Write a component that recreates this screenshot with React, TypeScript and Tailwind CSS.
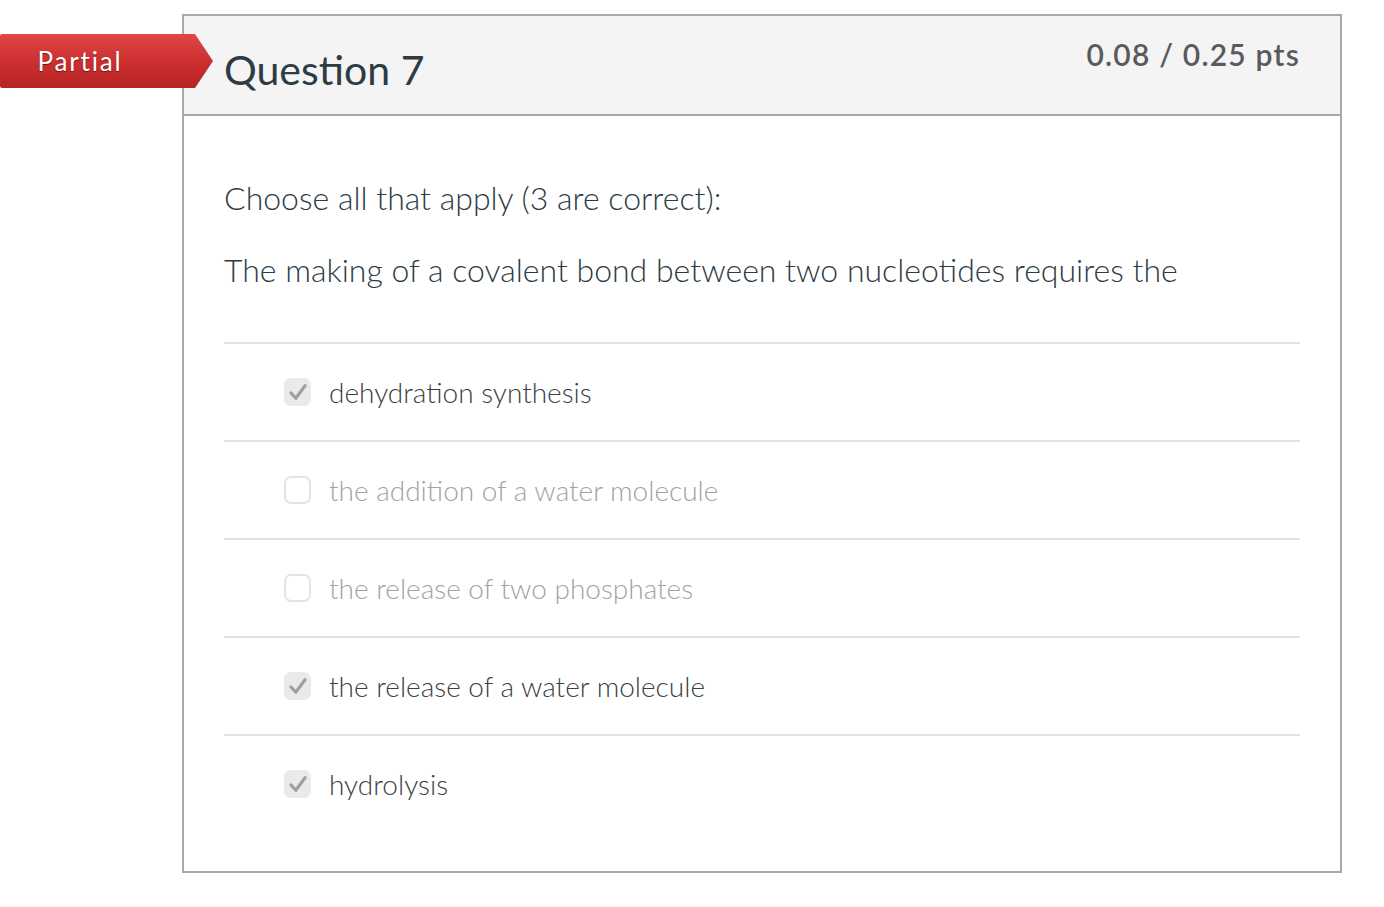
import React from 'react';

const answers = [
  { text: 'dehydration synthesis', checked: true },
  { text: 'the addition of a water molecule', checked: false },
  { text: 'the release of two phosphates', checked: false },
  { text: 'the release of a water molecule', checked: true },
  { text: 'hydrolysis', checked: true },
];

function Checkbox({ checked }: { checked: boolean }) {
  if (!checked) {
    return <div className="w-[27px] h-[28px] shrink-0 rounded-[7px] border-2 border-[#e4e4e4] bg-white" />;
  }
  return (
    <div className="w-[27px] h-[28px] shrink-0 rounded-[7px] bg-[#eaeaea] flex items-center justify-center">
      <svg width="18" height="17" viewBox="0 0 18 17" fill="none">
        <path d="M2 9 L6.8 14.2 L16 1.8" stroke="#a0a0a0" strokeWidth="3.2" strokeLinecap="round" strokeLinejoin="round" />
      </svg>
    </div>
  );
}

export default function App() {
  return (
    <div className="min-h-[907px] bg-white pt-[14px] font-['Lato','Liberation_Sans',sans-serif]">
      <div className="relative ml-[182px] w-[1160px] border-2 border-[#a9a9a9]">
        {/* status ribbon */}
        <div className="absolute left-[-184px] top-[18px] flex h-[54px] items-stretch">
          <div className="flex w-[195px] items-center justify-center rounded-l-[2px] bg-gradient-to-b from-[#e14747] via-[#cc2f2f] to-[#b52424] pr-[35px] text-[26px] tracking-[0.07em] text-white [text-shadow:0_1px_1px_rgba(0,0,0,0.5)]">
            Partial
          </div>
          <svg width="19" height="54" viewBox="0 0 19 54" className="-ml-px">
            <defs>
              <linearGradient id="rib" x1="0" y1="0" x2="0" y2="1">
                <stop offset="0" stopColor="#e14747" />
                <stop offset="0.5" stopColor="#cc2f2f" />
                <stop offset="1" stopColor="#b52424" />
              </linearGradient>
            </defs>
            <polygon points="0,0 1,0 19,27 1,54 0,54" fill="url(#rib)" />
          </svg>
        </div>

        <div className="flex h-[100px] items-start justify-between border-b-2 border-[#a9a9a9] bg-[#f4f4f4] px-[40px]">
          <h2 className="mt-[30px] text-[41px] leading-[48px] text-[#2d3b45]">Question 7</h2>
          <div className="mt-[19px] text-[30px] leading-[38px] tracking-[0.04em] font-semibold text-[#5a5a5a]">
            0.08 / 0.25 pts
          </div>
        </div>

        <div className="px-[40px] pt-[59px] pb-[39px]">
          <p className="text-[32px] leading-[45px] font-light text-[#2d3b45]">Choose all that apply (3 are correct):</p>
          <p className="mt-[27px] text-[32px] leading-[45px] font-light text-[#2d3b45]">
            The making of a covalent bond between two nucleotides requires the
          </p>

          <div className="mt-[50px]">
            {answers.map((a) => (
              <div key={a.text} className="flex h-[98px] items-center border-t-2 border-[#e2e2e2] pl-[60px]">
                <Checkbox checked={a.checked} />
                <span
                  className={`ml-[18px] text-[28px] leading-[36px] font-light ${
                    a.checked ? 'text-[#3b3f44]' : 'text-[#a3a3a3]'
                  }`}
                >
                  {a.text}
                </span>
              </div>
            ))}
          </div>
        </div>
      </div>
    </div>
  );
}
